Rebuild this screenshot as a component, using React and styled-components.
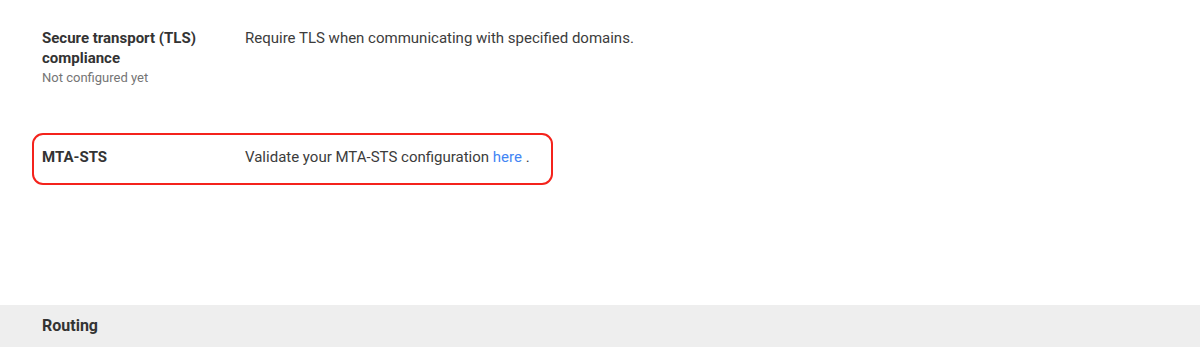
import styled, { createGlobalStyle } from 'styled-components';

const GlobalStyle = createGlobalStyle`
	body {
		margin: 0;
		background: #ffffff;
		font-family: Roboto, 'Noto Sans', Arial, sans-serif;
		-webkit-font-smoothing: antialiased;
	}
`;

const Page = styled.div`
	display: flex;
	flex-direction: column;
	width: 1200px;
	height: 347px;
	overflow: hidden;
`;

const Section = styled.div`
	display: flex;
	flex-direction: column;
	padding: 28px 42px 0;
	gap: 47px;
`;

const Row = styled.div`
	display: grid;
	grid-template-columns: 203px 1fr;
	align-items: start;
`;

const Highlight = styled.div`
	display: grid;
	grid-template-columns: 203px 1fr;
	align-items: start;
	width: 501px;
	margin-left: -10px;
	padding: 12px 8px 16px;
	border: 2px solid #f4231c;
	border-radius: 11px;
`;

const Label = styled.div`
	padding-right: 20px;
	display: flex;
	flex-direction: column;
`;

const Title = styled.div`
	font-size: 15px;
	line-height: 20px;
	font-weight: 700;
	color: #333333;
`;

const Status = styled.div`
	margin-top: 2px;
	font-size: 13px;
	line-height: 16px;
	color: #757575;
`;

const Description = styled.div`
	font-size: 15px;
	line-height: 20px;
	color: #3c3c3c;
`;

const Link = styled.a`
	color: #4285f4;
	text-decoration: none;
`;

const Band = styled.div`
	margin-top: 120px;
	padding: 11px 42px;
	background: #eeeeee;
	font-size: 16px;
	line-height: 20px;
	font-weight: 700;
	color: #333333;
`;

export default function App() {
	return (
		<Page>
			<GlobalStyle />
			<Section>
				<Row>
					<Label>
						<Title>Secure transport (TLS) compliance</Title>
						<Status>Not configured yet</Status>
					</Label>
					<Description>
						Require TLS when communicating with specified domains.
					</Description>
				</Row>
				<Highlight>
					<Label>
						<Title>MTA-STS</Title>
					</Label>
					<Description>
						Validate your MTA-STS configuration <Link href="#">here</Link> .
					</Description>
				</Highlight>
			</Section>
			<Band>Routing</Band>
		</Page>
	);
}
